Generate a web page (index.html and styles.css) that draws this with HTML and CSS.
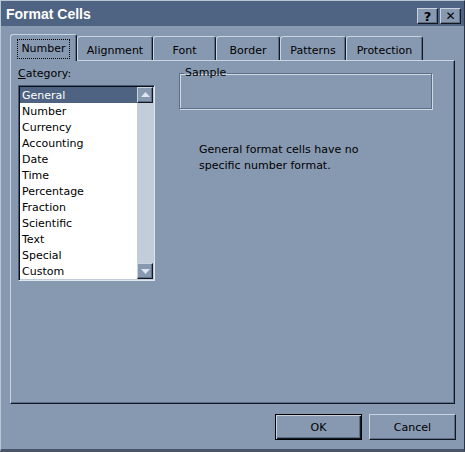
FILE: index.html
```html
<!DOCTYPE html>
<html>
<head>
<meta charset="utf-8">
<link rel="stylesheet" href="styles.css">
</head>
<body>
<div class="window">
  <div class="titlebar">
    <span class="title">Format Cells</span>
    <div class="tb-buttons">
      <span class="tb-btn">?</span>
      <span class="tb-btn close">✕</span>
    </div>
  </div>
  <div class="tabs">
    <div class="tab active w-number"><span class="focus">Number</span></div>
    <div class="tab w-align">Alignment</div>
    <div class="tab w-font">Font</div>
    <div class="tab w-border">Border</div>
    <div class="tab w-patterns">Patterns</div>
    <div class="tab w-protection">Protection</div>
  </div>
  <div class="panel">
    <div class="left">
      <div class="label"><u>C</u>ategory:</div>
      <div class="listbox">
        <ul class="items">
          <li class="sel">General</li>
          <li>Number</li>
          <li>Currency</li>
          <li>Accounting</li>
          <li>Date</li>
          <li>Time</li>
          <li>Percentage</li>
          <li>Fraction</li>
          <li>Scientific</li>
          <li>Text</li>
          <li>Special</li>
          <li>Custom</li>
        </ul>
        <div class="scrollbar">
          <div class="sb-btn"><svg width="9" height="6" viewBox="0 0 9 6"><polygon points="4.5,0 9,5 0,5" fill="#dde5ee"/></svg></div>
          <div class="sb-track"></div>
          <div class="sb-btn"><svg width="9" height="6" viewBox="0 0 9 6"><polygon points="0,1 9,1 4.5,6" fill="#dde5ee"/></svg></div>
        </div>
      </div>
    </div>
    <div class="right">
      <fieldset class="sample"><legend>Sample</legend></fieldset>
      <p class="desc">General format cells have no<br>specific number format.</p>
    </div>
  </div>
  <div class="buttons">
    <div class="btn default">OK</div>
    <div class="btn">Cancel</div>
  </div>
</div>
</body>
</html>
```
FILE: styles.css
```css
* { box-sizing: border-box; }
html, body { margin: 0; padding: 0; }
body {
  width: 465px;
  height: 452px;
  background: #8799b1;
  font-family: "DejaVu Sans", sans-serif;
  font-size: 11px;
  color: #000;
  overflow: hidden;
}
.window {
  width: 465px;
  height: 452px;
  border-top: 1px solid #b9c6d6;
  border-left: 1px solid #b9c6d6;
  border-right: 1px solid #2a3444;
  border-bottom: 3px solid #4a5668;
  display: flex;
  flex-direction: column;
}
.titlebar {
  height: 25px;
  background: #4f6482;
  display: flex;
  align-items: center;
  padding-left: 5px;
  padding-right: 3px;
}
.title {
  color: #fff;
  font-family: "Liberation Sans", sans-serif;
  font-weight: bold;
  font-size: 14px;
}
.tb-buttons {
  margin-left: auto;
  display: flex;
  gap: 2px;
  align-self: flex-end;
  margin-bottom: 2px;
}
.tb-btn {
  width: 21px;
  height: 16px;
  background: #8799b1;
  border-top: 1px solid #c8d4e0;
  border-left: 1px solid #c8d4e0;
  border-right: 1px solid #111822;
  border-bottom: 1px solid #111822;
  box-shadow: inset -1px -1px 0 #5d6e86;
  display: flex;
  align-items: center;
  justify-content: center;
  font-family: "DejaVu Sans", sans-serif;
  font-weight: bold;
  font-size: 13px;
  color: #000;
  line-height: 1;
}
.tb-btn.close { font-size: 12px; }
.tabs {
  display: flex;
  align-items: flex-end;
  margin-top: 8px;
  padding-left: 9px;
  height: 26px;
}
.tab {
  height: 24px;
  border-top: 1px solid #c8d4e0;
  border-left: 1px solid #c8d4e0;
  border-right: 1px solid #111822;
  box-shadow: inset -1px 0 0 #5d6e86;
  border-radius: 3px 3px 0 0;
  display: flex;
  align-items: center;
  justify-content: center;
  background: #8799b1;
  padding-top: 4px;
}
.tab.active {
  height: 27px;
  margin-bottom: -1px;
  position: relative;
  z-index: 1;
  padding-top: 2px;
}
.focus {
  border: 1px dotted #000;
  padding: 2px 3px 3px 3px;
}
.w-number { width: 67px; }
.w-align { width: 76px; }
.w-font { width: 63px; }
.w-border { width: 64px; }
.w-patterns { width: 66px; }
.w-protection { width: 77px; }
.panel {
  margin-left: 9px;
  width: 445px;
  height: 344px;
  border-top: 1px solid #c8d4e0;
  border-left: 1px solid #c8d4e0;
  border-right: 1px solid #111822;
  border-bottom: 1px solid #111822;
  box-shadow: inset -1px -1px 0 #5d6e86;
  display: flex;
  padding: 6px 0 0 7px;
}
.left { width: 137px; }
.label {
  line-height: 14px;
  height: 14px;
  margin-bottom: 4px;
}
.listbox {
  width: 137px;
  height: 196px;
  border-top: 1px solid #4a5a72;
  border-left: 1px solid #4a5a72;
  border-right: 1px solid #dfe6ee;
  border-bottom: 1px solid #dfe6ee;
  box-shadow: inset 1px 1px 0 #0b0f18, inset -1px -1px 0 #c2ccd8;
  background: #fff;
  display: flex;
  padding: 1px;
}
.items {
  list-style: none;
  margin: 0;
  padding: 0;
  flex: 1;
}
.items li {
  height: 16px;
  line-height: 16px;
  padding-left: 2px;
  padding-top: 1px;
  white-space: nowrap;
}
.items li.sel {
  background: #4e6382;
  color: #fff;
}
.scrollbar {
  width: 16px;
  display: flex;
  flex-direction: column;
  background: #c3cdd9;
}
.sb-track { flex: 1; }
.sb-btn {
  width: 16px;
  height: 16px;
  background: #8799b1;
  border-top: 1px solid #c8d4e0;
  border-left: 1px solid #c8d4e0;
  border-right: 1px solid #111822;
  border-bottom: 1px solid #111822;
  box-shadow: inset -1px -1px 0 #5d6e86;
  display: flex;
  align-items: center;
  justify-content: center;
}
.right {
  margin-left: 24px;
  margin-top: -1px;
  width: 253px;
}
.sample {
  margin: 0;
  padding: 0;
  width: 253px;
  height: 43px;
  border: 1px solid #5d6e86;
  box-shadow: inset 1px 1px 0 #d0dae4, 1px 1px 0 #d0dae4;
}
.sample legend {
  padding: 0 1px;
  margin-left: 4px;
  line-height: 14px;
  font-size: 11px;
}
.desc {
  margin: 33px 0 0 20px;
  line-height: 16px;
}
.buttons {
  display: flex;
  justify-content: flex-end;
  gap: 7px;
  margin-top: 10px;
  padding-right: 8px;
}
.btn {
  width: 87px;
  height: 26px;
  border-top: 1px solid #c8d4e0;
  border-left: 1px solid #c8d4e0;
  border-right: 1px solid #111822;
  border-bottom: 1px solid #111822;
  box-shadow: inset -1px -1px 0 #5d6e86;
  display: flex;
  align-items: center;
  justify-content: center;
}
.btn.default {
  border: 1px solid #000;
  box-shadow: inset 1px 1px 0 #c8d4e0, inset -1px -1px 0 #111822, inset -2px -2px 0 #5d6e86;
}
```
